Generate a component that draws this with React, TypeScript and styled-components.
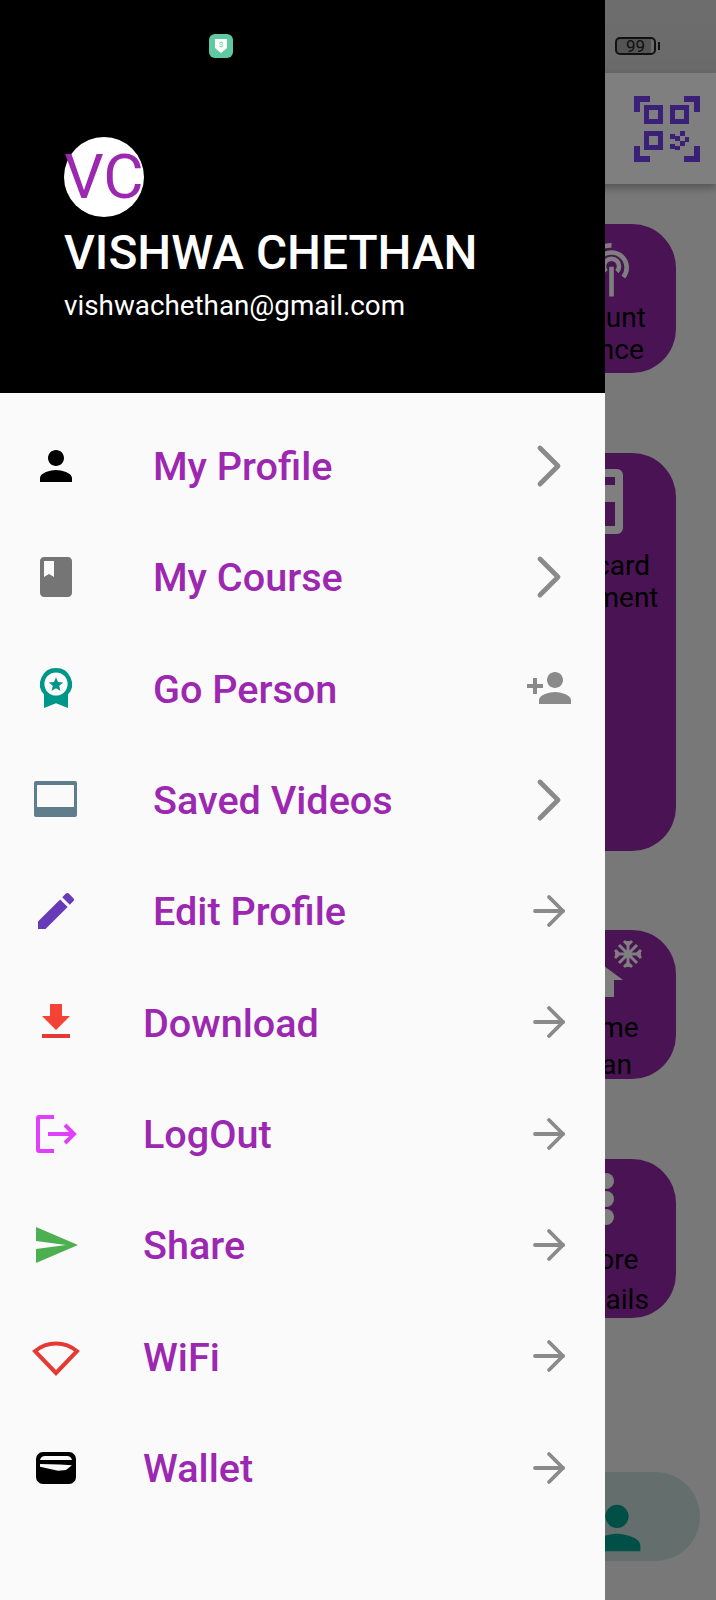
import { ReactNode } from 'react'
import styled, { createGlobalStyle } from 'styled-components'
import { ArrowRight, ChevronRight } from 'lucide-react'

const GlobalStyle = createGlobalStyle`
  html, body { margin: 0; padding: 0; background: #7a7a7a; }
  * { box-sizing: border-box; }
  body { font-family: Roboto, "Liberation Sans", sans-serif; }
`

const Screen = styled.div`
  position: relative;
  width: 716px;
  height: 1600px;
  overflow: hidden;
  background: #f0f0f0;
`

// App behind the drawer
const StatusBar = styled.div`
  height: 73px;
  background: linear-gradient(#dcdcdc, #d4d4d4);
  display: flex;
  align-items: flex-start;
  justify-content: flex-end;
  padding: 37px 60px 0 0;
`

const Battery = styled.div`
  width: 41px;
  height: 18px;
  border: 2px solid #222;
  border-radius: 5px;
  font-size: 17px;
  line-height: 15px;
  text-align: center;
  color: #222;
  background: linear-gradient(90deg, #a8a8a8 92%, #d8d8d8 92%);
  position: relative;
  &::after {
    content: '';
    position: absolute;
    right: -6px;
    top: 3px;
    width: 2px;
    height: 8px;
    background: #222;
  }
`

const AppBar = styled.div`
  height: 111px;
  background: #fff;
  box-shadow: 0 4px 8px rgba(0, 0, 0, 0.3);
  display: flex;
  align-items: center;
  justify-content: flex-end;
  padding: 0 16px 0 0;
`

const Cards = styled.div`
  display: flex;
  flex-direction: column;
  align-items: flex-end;
  padding: 40px 40px 0 0;
`

const Card = styled.div<{ $height: number; $gap: number; $top: number; $line: number; $shift: number }>`
  width: 180px;
  height: ${p => p.$height}px;
  margin-bottom: ${p => p.$gap}px;
  background: #9527a8;
  border-radius: 44px;
  display: flex;
  flex-direction: column;
  align-items: center;
  padding: ${p => p.$top}px 0 0 ${p => p.$shift}px;
  color: #000;
  font-size: 28px;
  line-height: ${p => p.$line}px;
  text-align: center;
  white-space: nowrap;
`

const CardIcon = styled.svg<{ $nudge?: number; $below?: number }>`
  display: block;
  flex: none;
  color: #fff;
  margin-left: ${p => p.$nudge ?? 0}px;
  margin-bottom: ${p => p.$below ?? 0}px;
`

const Fab = styled.div`
  position: absolute;
  left: 520px;
  top: 1472px;
  width: 180px;
  height: 89px;
  border-radius: 45px;
  background: #c8dfdb;
  color: #00a08f;
  display: flex;
  align-items: flex-start;
  padding: 21px 0 0 62px;
`

const Scrim = styled.div`
  position: absolute;
  inset: 0;
  background: rgba(0, 0, 0, 0.5);
`

// Drawer
const Drawer = styled.aside`
  position: absolute;
  left: 0;
  top: 0;
  bottom: 0;
  width: 605px;
  background: #fafafa;
  display: flex;
  flex-direction: column;
`

const Header = styled.header`
  position: relative;
  height: 393px;
  background: #000;
  padding: 137px 0 0 64px;
  color: #fff;
`

const NotifBadge = styled.div`
  position: absolute;
  left: 209px;
  top: 34px;
  width: 24px;
  height: 24px;
  border-radius: 6px;
  background: #5fc9a4;
  display: flex;
  align-items: center;
  justify-content: center;
`

const Avatar = styled.div`
  width: 80px;
  height: 80px;
  border-radius: 50%;
  background: #fff;
  color: #9c27b0;
  font-size: 62px;
  line-height: 80px;
  font-weight: 400;
  display: flex;
  justify-content: center;
  white-space: nowrap;
`

const Name = styled.div`
  margin-top: 9px;
  font-size: 47.8px;
  line-height: 54px;
  font-weight: 500;
  white-space: nowrap;
`

const Email = styled.div`
  margin-top: 8px;
  font-size: 27.8px;
  line-height: 36px;
  white-space: nowrap;
`

const Menu = styled.nav`
  padding-top: 17px;
`

const Row = styled.div<{ $indent: number }>`
  height: 111.33px;
  display: grid;
  grid-template-columns: ${p => p.$indent}px 1fr 48px;
  align-items: center;
  padding: 0 32px 0 32px;
`

const RowIcon = styled.svg<{ $color: string }>`
  display: block;
  width: 48px;
  height: 48px;
  color: ${p => p.$color};
`

const Label = styled.span`
  color: #9c27b0;
  font-size: 39.6px;
  font-weight: 500;
  margin-top: 2px;
  white-space: nowrap;
`

const Trailing = styled.span`
  display: flex;
  align-items: center;
  justify-content: center;
  color: #8a8a8a;
  svg {
    flex: none;
  }
`

function Glyph({ color, children }: { color: string; children: ReactNode }) {
  return (
    <RowIcon $color={color} viewBox='0 0 24 24' fill='currentColor'>
      {children}
    </RowIcon>
  )
}

const personPath = 'M12 12c2.21 0 4-1.79 4-4s-1.79-4-4-4-4 1.79-4 4 1.79 4 4 4zm0 2c-2.67 0-8 1.34-8 4v2h16v-2c0-2.66-5.33-4-8-4z'
const personAdd =
  'M15 12c2.21 0 4-1.79 4-4s-1.79-4-4-4-4 1.79-4 4 1.79 4 4 4zm-9-2V7H4v3H1v2h3v3h2v-3h3v-2H6zm9 4c-2.67 0-8 1.34-8 4v2h16v-2c0-2.66-5.33-4-8-4z'

type Item = { label: string; color: string; indent: number; trail: 'chevron' | 'arrow' | 'add'; icon: ReactNode }

const items: Item[] = [
  { label: 'My Profile', color: '#000', indent: 121, trail: 'chevron', icon: <path d={personPath} /> },
  {
    label: 'My Course',
    color: '#757575',
    indent: 121,
    trail: 'chevron',
    icon: <path d='M18 2H6c-1.1 0-2 .9-2 2v16c0 1.1.9 2 2 2h12c1.1 0 2-.9 2-2V4c0-1.1-.9-2-2-2zM6 4h5v8l-2.5-1.5L6 12V4z' />,
  },
  {
    label: 'Go Person',
    color: '#009688',
    indent: 121,
    trail: 'add',
    icon: (
      <path
        fillRule='evenodd'
        d='M12 2a8 8 0 0 1 6 13.3V22l-6-2.4L6 22v-6.7A8 8 0 0 1 12 2zm0 2.2a5.8 5.8 0 1 0 0 11.6 5.8 5.8 0 0 0 0-11.6zM12 6.6l1 2.4 2.6.2-2 1.7.6 2.5-2.2-1.3-2.2 1.3.6-2.5-2-1.7 2.6-.2z'
      />
    ),
  },
  {
    label: 'Saved Videos',
    color: '#607d8b',
    indent: 121,
    trail: 'chevron',
    icon: <path fillRule='evenodd' d='M2 2.5h19.5c.6 0 1 .4 1 1v16c0 .6-.4 1-1 1H2c-.6 0-1-.4-1-1v-16c0-.6.4-1 1-1zM2.5 4.5v11h18.5v-11z' />,
  },
  {
    label: 'Edit Profile',
    color: '#673ab7',
    indent: 121,
    trail: 'arrow',
    icon: <path d='M3 17.25V21h3.75L17.81 9.94l-3.75-3.75L3 17.25zM20.71 7.04c.39-.39.39-1.02 0-1.41l-2.34-2.34c-.39-.39-1.02-.39-1.41 0l-1.83 1.83 3.75 3.75 1.83-1.83z' />,
  },
  {
    label: 'Download',
    color: '#f44336',
    indent: 111,
    trail: 'arrow',
    icon: (
      <>
        <path d='M19 9h-4V3H9v6H5l7 7 7-7z' />
        <path fill='#e53935' d='M5 18v2h14v-2H5z' />
      </>
    ),
  },
  {
    label: 'LogOut',
    color: '#e040fb',
    indent: 111,
    trail: 'arrow',
    icon: (
      <g fill='none' stroke='currentColor' strokeWidth='2'>
        <path d='M11 3.5H3.6a.6.6 0 0 0-.6.6v15.8c0 .3.3.6.6.6H11' />
        <path d='M8 12h13M16.5 7.5 21 12l-4.5 4.5' />
      </g>
    ),
  },
  { label: 'Share', color: '#4caf50', indent: 111, trail: 'arrow', icon: <path d='M2 3v7l15 2-15 2v7l21-9z' /> },
  {
    label: 'WiFi',
    color: '#e53935',
    indent: 111,
    trail: 'arrow',
    icon: <path fill='none' stroke='currentColor' strokeWidth='2' d='M12 20.5 1.5 9.6C7.5 4.4 16.5 4.4 22.5 9.6z' />,
  },
  {
    label: 'Wallet',
    color: '#000',
    indent: 111,
    trail: 'arrow',
    icon: (
      <>
        <rect x='2' y='4' width='20' height='16' rx='3.5' />
        <path fill='#fafafa' d='M4 8c.4-1.2 1.2-2 2.5-2h11c1.3 0 2.1.8 2.5 2H4zM4 10 14 10.2 20 10.6 17 13 13 13.4 4 11.4z' />
      </>
    ),
  },
]

export default function App() {
  return (
    <Screen>
      <GlobalStyle />
      <div>
        <StatusBar>
          <Battery>99</Battery>
        </StatusBar>
        <AppBar>
          {/* qr scanner */}
          <svg width='66' height='66' viewBox='0 0 66 66' fill='#7541ee'>
            <path d='M0 0h16v6H6v10H0zM50 0h16v16h-6V6H50zM0 50h6v10h10v6H0zM60 50h6v16H50v-6h10z' />
            <path fillRule='evenodd' d='M10 9h19v19H10zm5 5v9h9v-9zM36 9h19v19H36zm5 5v9h9v-9zM10 35h19v19H10zm5 5v9h9v-9z' />
            <path d='M36 38h5v5h-5zM46 35h5v5h-5zM41 40h5v5h-5zM51 41h4v5h-4zM36 48h5v5h-5zM46 45h5v5h-5zM41 50h5v4h-5z' />
          </svg>
        </AppBar>
        <Cards>
          <Card $height={149} $gap={80} $top={13} $line={32} $shift={16}>
            <CardIcon $nudge={34} width='65' height='65' viewBox='0 0 24 24' fill='none' stroke='currentColor' strokeWidth='1.7'>
              <path d='M5 15.5a8 8 0 0 1 7-12.4M7.6 14.8a5.6 5.6 0 1 1 8.8 0M10 12.8a2.8 2.8 0 1 1 4 0M12 11v11' />
            </CardIcon>
            <span>Account</span>
            <span>Balance</span>
          </Card>
          <Card $height={398} $gap={79} $top={16} $line={32} $shift={16}>
            <CardIcon $nudge={-8} $below={16} width='65' height='65' viewBox='0 0 65 65' fill='currentColor'>
              <path fillRule='evenodd' d='M6 0h53a6 6 0 0 1 6 6v53a6 6 0 0 1-6 6H6a6 6 0 0 1-6-6V6a6 6 0 0 1 6-6zm4 8v8h47V8zm0 25v24h47V33z' />
            </CardIcon>
            <span>Postcard</span>
            <span>Statement</span>
          </Card>
          <Card $height={149} $gap={80} $top={5} $line={37} $shift={30}>
            <CardIcon $below={8} width='90' height='66' viewBox='0 0 90 66' fill='currentColor'>
              <path d='M45 25 11 45h9v17h42V45h9L52 31z' transform='translate(-4 0)' />
              <path
                fill='none'
                stroke='currentColor'
                strokeWidth='3'
                d='M72 6v26M59 19h26M63 10l18 18M81 10 63 28M68 6l4 4 4-4M68 32l4-4 4 4M59 15l4 4-4 4M85 15l-4 4 4 4'
              />
            </CardIcon>
            <span>Home</span>
            <span>Loan</span>
          </Card>
          <Card $height={159} $gap={0} $top={13} $line={40} $shift={40}>
            <CardIcon $below={4} width='18' height='64' viewBox='0 0 18 64' fill='currentColor'>
              <circle cx='9' cy='9' r='8' />
              <circle cx='9' cy='27' r='8' />
              <circle cx='9' cy='45' r='8' />
            </CardIcon>
            <span>More</span>
            <span>Details</span>
          </Card>
        </Cards>
        <Fab>
          <svg width='70' height='70' viewBox='0 0 24 24' fill='currentColor'>
            <path d={personPath} />
          </svg>
        </Fab>
      </div>
      <Scrim />
      <Drawer>
        <Header>
          <NotifBadge>
            <svg width='14' height='16' viewBox='0 0 14 16'>
              <path fill='#fff' d='M1 1h12v9l-6 5-6-5z' />
              <text x='7' y='9' fontSize='8' textAnchor='middle' fill='#5fc9a4' fontFamily='Roboto'>
                $
              </text>
            </svg>
          </NotifBadge>
          <Avatar>VC</Avatar>
          <Name>VISHWA CHETHAN</Name>
          <Email>vishwachethan@gmail.com</Email>
        </Header>
        <Menu>
          {items.map(item => (
            <Row key={item.label} $indent={item.indent}>
              <Glyph color={item.color}>{item.icon}</Glyph>
              <Label>{item.label}</Label>
              <Trailing>
                {item.trail == 'chevron' && <ChevronRight size={72} strokeWidth={1.6} />}
                {item.trail == 'arrow' && <ArrowRight size={48} strokeWidth={1.9} />}
                {item.trail == 'add' && (
                  <svg width='48' height='48' viewBox='0 0 24 24' fill='currentColor'>
                    <path d={personAdd} />
                  </svg>
                )}
              </Trailing>
            </Row>
          ))}
        </Menu>
      </Drawer>
    </Screen>
  )
}
